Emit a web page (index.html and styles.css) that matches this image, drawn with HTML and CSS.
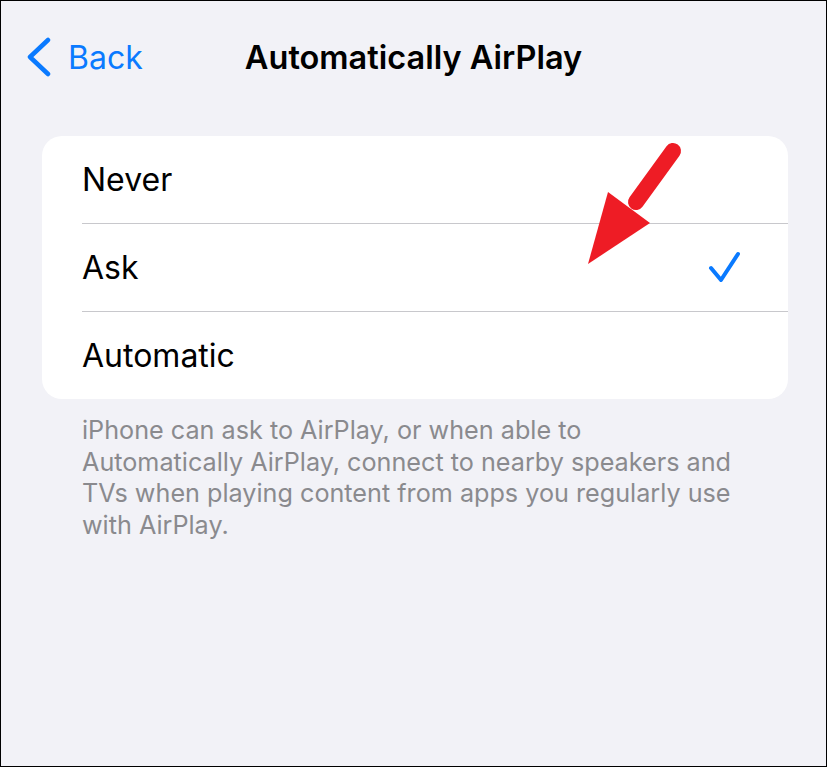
FILE: index.html
```html
<!DOCTYPE html>
<html lang="en">
  <head>
    <title>Automatically AirPlay</title>
    <link rel="stylesheet" href="styles.css">
  </head>
  <body>
    <div class="screen">
      <div class="navbar">
        <a class="back" href="#">
          <svg class="chevron" width="26" height="40" viewBox="0 0 26 40">
            <polyline points="21,3 3,20 21,37" />
          </svg>
          <span>Back</span>
        </a>
        <h1 class="title">Automatically AirPlay</h1>
        <div></div>
      </div>

      <div class="group">
        <div class="row">Never</div>
        <div class="row">Ask
          <svg class="check" width="34" height="34" viewBox="0 0 34 34">
            <polyline points="3,17 13,29 30,3" />
          </svg>
        </div>
        <div class="row">Automatic</div>

        <!-- red pointer drawn over the list -->
        <svg class="pointer" width="120" height="140" viewBox="0 0 120 140">
          <line x1="103" y1="15" x2="66" y2="66" />
          <polygon points="18,128 38,56 80,87" />
        </svg>
      </div>

      <p class="footer">iPhone can ask to AirPlay, or when able to Automatically AirPlay, connect to nearby speakers and TVs when playing content from apps you regularly use with AirPlay.</p>
    </div>
  </body>
</html>
```

FILE: styles.css
```css
body {
  margin: 0;
}

.screen {
  width: 827px;
  height: 767px;
  box-sizing: border-box;
  border: 1px solid #000;
  background-color: #f2f2f7;
  font-family: Inter, "Liberation Sans", sans-serif;
  overflow: hidden;
}

.navbar {
  display: grid;
  grid-template-columns: 1fr auto 1fr;
  align-items: center;
  height: 112px;
}

.back {
  display: flex;
  align-items: center;
  gap: 15px;
  padding-left: 26px;
  color: #0a7aff;
  text-decoration: none;
  font-size: 32px;
}

.chevron polyline {
  fill: none;
  stroke: #0a7aff;
  stroke-width: 4.5;
  stroke-linecap: round;
  stroke-linejoin: round;
}

.title {
  margin: 0;
  font-size: 32.5px;
  font-weight: 600;
  color: #000;
}

.group {
  position: relative;
  margin: 23px 38px 0 41px;
  background: #fff;
  border-radius: 20px;
}

.row {
  display: flex;
  align-items: center;
  justify-content: space-between;
  height: 87px;
  margin-left: 40px;
  padding-right: 46px;
  font-size: 32px;
  color: #000;
  border-bottom: 1px solid #c8c8cc;
}

.row:last-of-type {
  border-bottom: none;
}

.check polyline {
  fill: none;
  stroke: #0a7aff;
  stroke-width: 4;
  stroke-linecap: round;
  stroke-linejoin: round;
}

.pointer {
  position: absolute;
  left: 528px;
  top: 0;
}

.pointer line {
  stroke: #ee1c25;
  stroke-width: 16;
  stroke-linecap: round;
}

.pointer polygon {
  fill: #ee1c25;
}

.footer {
  margin: 16px 78px 0 81px;
  font-size: 25.2px;
  line-height: 31.7px;
  color: #8a8a8e;
}
```
